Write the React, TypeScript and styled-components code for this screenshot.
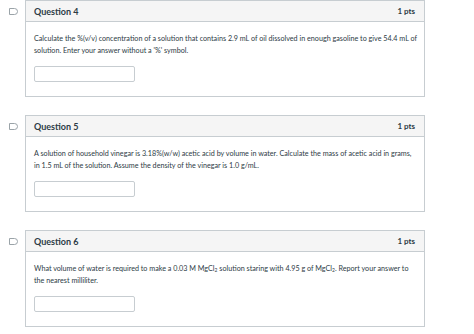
import { FC, ReactNode } from "react";
import styled, { createGlobalStyle } from "styled-components";

const GlobalStyle = createGlobalStyle`
  html, body {
    margin: 0;
    padding: 0;
    background: #ffffff;
  }
  body {
    font-family: Lato, "Liberation Sans", sans-serif;
    color: #2d3b45;
  }
`;

const Page = styled.main`
  width: 474px;
  display: flex;
  flex-direction: column;
  gap: 18px;
`;

const QuestionRow = styled.section`
  display: flex;
  align-items: flex-start;
`;

const FlagCol = styled.div`
  width: 25px;
  display: flex;
  justify-content: center;
  padding-top: 8px;
  padding-left: 2px;
  box-sizing: border-box;
`;

const Card = styled.div`
  width: 400px;
  border: 1px solid #c7cdd1;
  box-sizing: border-box;
`;

const Header = styled.header`
  height: 20px;
  background: #f5f5f5;
  border-bottom: 1px solid #c7cdd1;
  display: flex;
  align-items: center;
  justify-content: space-between;
  padding: 0 9px 0 8px;
  font-size: 9px;
  font-weight: 700;
`;

const Points = styled.span`
  font-weight: 700;
  font-size: 8px;
`;

const Body = styled.div`
  padding: 11px 7px 14px 8px;
`;

const Prompt = styled.p`
  margin: 0;
  font-size: 7.2px;
  line-height: 12px;
`;

const Sub = styled.sub`
  font-size: 5px;
  line-height: 0;
  vertical-align: -1px;
`;

const Answer = styled.input`
  display: block;
  margin-top: 9px;
  width: 101px;
  height: 16px;
  box-sizing: border-box;
  border: 1px solid #c7cdd1;
  border-radius: 2px;
  background: #fff;
`;

const Flag: FC = () => (
  <svg width="9" height="7" viewBox="0 0 9 7">
    <path
      d="M0.5 0.5 H5.5 Q8.5 0.5 8.5 3.5 Q8.5 6.5 5.5 6.5 H0.5 Z"
      fill="none"
      stroke="#9aa3a8"
      strokeWidth="1"
    />
  </svg>
);

type Q = { title: string; prompt: ReactNode };

const questions: Q[] = [
  {
    title: "Question 4",
    prompt:
      "Calculate the %(v/v) concentration of a solution that contains 2.9 mL of oil dissolved in enough gasoline to give 54.4 mL of solution. Enter your answer without a '%' symbol.",
  },
  {
    title: "Question 5",
    prompt:
      "A solution of household vinegar is 3.18%(w/w) acetic acid by volume in water. Calculate the mass of acetic acid in grams, in 1.5 mL of the solution. Assume the density of the vinegar is 1.0 g/mL.",
  },
  {
    title: "Question 6",
    prompt: (
      <>
        What volume of water is required to make a 0.03 M MgCl<Sub>2</Sub> solution staring with 4.95 g of MgCl
        <Sub>2</Sub>. Report your answer to the nearest milliliter.
      </>
    ),
  },
];

const App: FC = () => (
  <>
    <GlobalStyle />
    <Page>
      {questions.map((q) => (
        <QuestionRow key={q.title}>
          <FlagCol>
            <Flag />
          </FlagCol>
          <Card>
            <Header>
              <span>{q.title}</span>
              <Points>1 pts</Points>
            </Header>
            <Body>
              <Prompt>{q.prompt}</Prompt>
              <Answer type="text" />
            </Body>
          </Card>
        </QuestionRow>
      ))}
    </Page>
  </>
);

export default App;
